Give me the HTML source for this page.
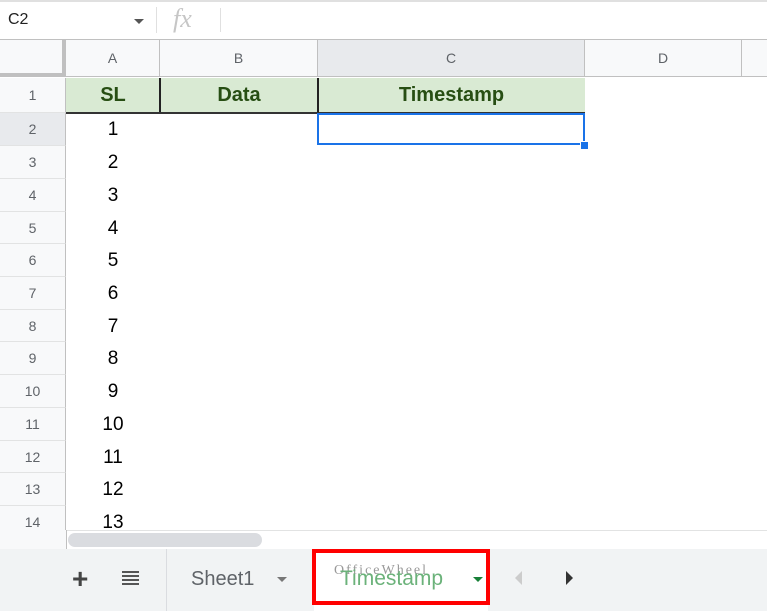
<html><head><style>
body{margin:0;width:767px;height:611px;overflow:hidden;background:#fff;font-family:"Liberation Sans",Arial,sans-serif;position:relative}
.a{position:absolute}
.rh{position:absolute;left:0;width:66px;background:#f8f9fa;border-bottom:1px solid #e2e3e3;border-right:1px solid #c0c0c0;color:#5f6368;font-size:14px;text-align:center;box-sizing:border-box}
.cell{position:absolute;text-align:center;font-size:19px;color:#000}
.ch{position:absolute;top:40px;height:37px;background:#f8f9fa;border-right:1px solid #c0c0c0;border-bottom:1px solid #c0c0c0;box-sizing:border-box;color:#5f6368;font-size:14px;text-align:center;line-height:37px}
</style></head><body>
<div class="a" style="left:0;top:0;width:767px;height:2px;background:#e0e0e0"></div>
<div class="a" style="left:8px;top:11px;font-size:16px;color:#222">C2</div>
<div class="a" style="left:134px;top:19px;width:0;height:0;border-left:5px solid transparent;border-right:5px solid transparent;border-top:5px solid #555"></div>
<div class="a" style="left:156px;top:7px;width:1px;height:26px;background:#e0e0e0"></div>
<div class="a" style="left:173px;top:4px;font-family:'Liberation Serif',serif;font-style:italic;font-size:26px;color:#c6c6c6">fx</div>
<div class="a" style="left:220px;top:8px;width:1px;height:24px;background:#e0e0e0"></div>
<div class="a" style="left:0;top:39px;width:767px;height:1px;background:#c0c0c0"></div>
<div class="a" style="left:0;top:40px;width:66px;height:37px;background:#f8f9fa;border-right:4px solid #c0c0c0;border-bottom:4px solid #c0c0c0;box-sizing:border-box"></div>
<div class="ch" style="left:66px;width:94px">A</div>
<div class="ch" style="left:160px;width:158px">B</div>
<div class="ch" style="left:318px;width:267px;background:#e8eaed">C</div>
<div class="ch" style="left:585px;width:157px">D</div>
<div class="ch" style="left:742px;width:25px;border-right:none"></div>
<div id="rows"></div>
<div class="a" style="left:66px;top:78px;width:519px;height:35px;background:#d9ead3"></div>
<div class="a" style="left:159px;top:78px;width:2px;height:35px;background:#222"></div>
<div class="a" style="left:317px;top:78px;width:2px;height:35px;background:#222"></div>
<div class="a" style="left:66px;top:112px;width:519px;height:2px;background:#333"></div>
<div class="cell" style="left:66px;width:94px;top:84px;font-size:20px;font-weight:bold;color:#274e13">SL</div>
<div class="cell" style="left:160px;width:158px;top:84px;font-size:20px;font-weight:bold;color:#274e13">Data</div>
<div class="cell" style="left:318px;width:267px;top:84px;font-size:20px;font-weight:bold;color:#274e13">Timestamp</div>
<div class="a" style="left:317px;top:113px;width:268px;height:32px;border:2px solid #1a73e8;box-sizing:border-box"></div>
<div class="a" style="left:580px;top:141px;width:7px;height:7px;background:#1a73e8;border:1px solid #fff"></div>
<div class="a" style="left:0;top:530px;width:767px;height:19px;background:#fff;border-top:1px solid #e2e3e3"></div>
<div class="a" style="left:0;top:530px;width:66px;height:19px;background:#f8f9fa;border-right:1px solid #c0c0c0"></div>
<div class="a" style="left:68px;top:533px;width:194px;height:14px;border-radius:7px;background:#dadce0"></div>
<div class="a" style="left:0;top:549px;width:767px;height:62px;background:#f1f3f4"></div>
<div class="a" style="left:72px;top:563px;font-size:28px;font-weight:bold;color:#444">+</div>
<div class="a" style="left:122px;top:571px;width:17px;height:15px;background:repeating-linear-gradient(#555 0 2px,transparent 2px 4px)"></div>
<div class="a" style="left:166px;top:549px;width:1px;height:62px;background:#dadce0"></div>
<div class="a" style="left:191px;top:568px;font-size:20px;color:#5f6368">Sheet1</div>
<div class="a" style="left:277px;top:577px;border-left:5px solid transparent;border-right:5px solid transparent;border-top:5px solid #777"></div>
<div class="a" style="left:314px;top:549px;width:174px;height:62px;background:#fff"></div>
<div class="a" style="left:334px;top:563px;font-size:14px;color:#999;letter-spacing:2px;font-family:'Liberation Serif',serif">OfficeWheel</div>
<div class="a" style="left:340px;top:567px;font-size:21px;color:#6bb27a">Timestamp</div>
<div class="a" style="left:473px;top:577px;border-left:5px solid transparent;border-right:5px solid transparent;border-top:5px solid #188038"></div>
<div class="a" style="left:312px;top:549px;width:178px;height:56px;border:4px solid #f00;box-sizing:border-box"></div>
<div class="a" style="left:515px;top:571px;border-top:7px solid transparent;border-bottom:7px solid transparent;border-right:7px solid #ccc"></div>
<div class="a" style="left:566px;top:571px;border-top:7px solid transparent;border-bottom:7px solid transparent;border-left:7px solid #333"></div>
<script>
var h='';
var tops=[78,113,146,179,212,244,277,310,342,375,408,441,473,506,539];
for(var i=0;i<14;i++){var t=tops[i],b=tops[i+1];
h+='<div class="rh" style="top:'+t+'px;height:'+(b-t)+'px;line-height:'+(b-t)+'px'+(i==1?';background:#e8eaed':'')+'">'+(i+1)+'</div>';
if(i>0){h+='<div class="cell" style="left:66px;width:94px;top:'+(t+6)+'px">'+i+'</div>';}
}
document.getElementById('rows').innerHTML=h;
</script>
</body></html>
